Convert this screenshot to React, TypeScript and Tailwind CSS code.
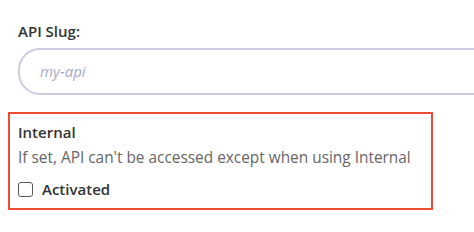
export default function App() {
  return (
    <div className="w-[474px] h-[232px] bg-white overflow-hidden" style={{ fontFamily: '"Open Sans", "Noto Sans", sans-serif' }}>
      <div className="pl-[18px] pt-[21px]">
        <div className="text-[15px] font-semibold text-[#333333] leading-[20px]">API Slug:</div>
        <div className="mt-[7px] h-[47px] w-[520px] rounded-[22px] border-2 border-[#cccbe3] flex items-center pl-[20px]">
          <span className="italic text-[15px] text-[#a9a8c6]">my-api</span>
        </div>
      </div>
      <div className="ml-[8px] mt-[17px] w-[425px] h-[98px] border-2 border-[#ee4b37] pl-[8px] pt-[8px]">
        <div className="text-[15px] font-semibold text-[#333333] leading-[20px]">Internal</div>
        <div className="mt-[6px] text-[15.4px] text-[#666666] leading-[20px]">If set, API can't be accessed except when using Internal</div>
        <div className="mt-[10px] flex items-center gap-[9px]">
          <div className="w-[15px] h-[15px] rounded-[3px] border-[1.5px] border-[#555555] bg-white" />
          <span className="text-[15px] font-semibold text-[#333333]">Activated</span>
        </div>
      </div>
    </div>
  );
}
